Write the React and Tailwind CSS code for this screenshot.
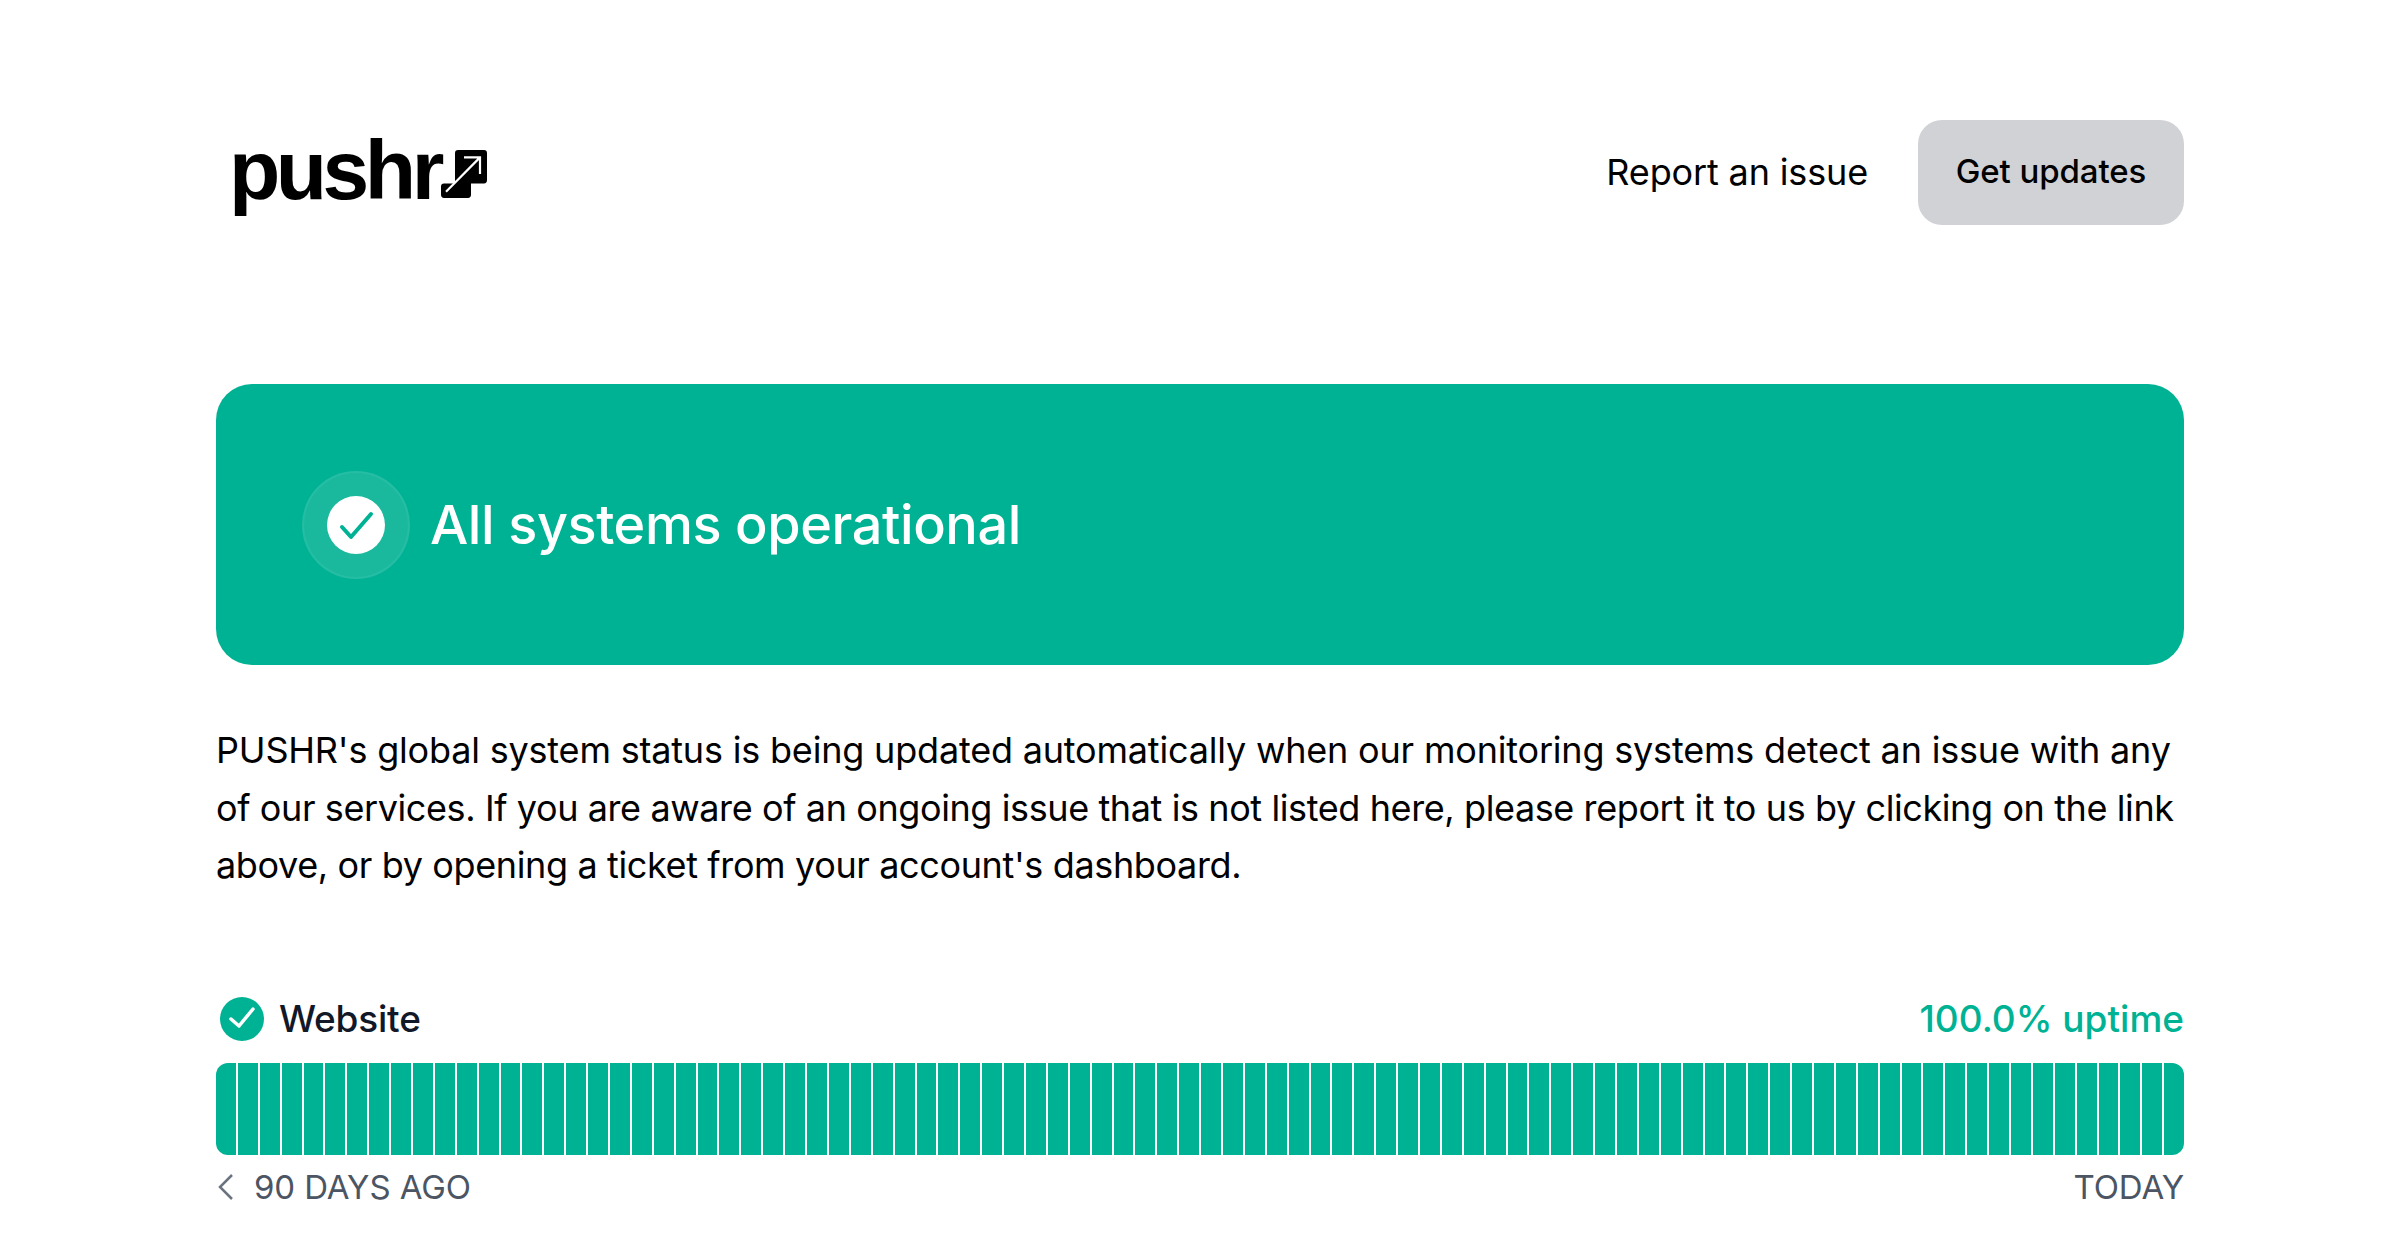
const DAYS = Array.from({ length: 90 }, (_, i) => i);

function LogoMark() {
    return (
        <svg width="48" height="50" viewBox="0 0 48 48" preserveAspectRatio="none" className="-ml-[1px] mt-[8px]">
            <path d="M16 4 a3 3 0 0 1 3-3 h26 a3 3 0 0 1 3 3 v26 a3 3 0 0 1-3 3 h-13 v11 a3 3 0 0 1-3 3 h-24 a3 3 0 0 1-3-3 v-8 a3 3 0 0 1 3-3 h11 z" fill="#000" />
            <path d="M7 41 L40 9 M25 8 H41 V24" fill="none" stroke="#fff" strokeWidth="2.2" />
        </svg>
    );
}

function CheckMark({ size, points, width, className }) {
    return (
        <svg width={size} height={size} viewBox={`0 0 ${size} ${size}`} className={className}>
            <path d={points} fill="none" stroke="currentColor" strokeWidth={width} strokeLinecap="round" strokeLinejoin="round" />
        </svg>
    );
}

export default function App() {
    return (
        <div className="min-h-[1260px] bg-white px-[216px] pt-[120px] font-['Inter',sans-serif] text-black">
            <header className="flex h-[105px] items-center justify-between">
                <div className="-mt-[5px] ml-[13px] flex items-center">
                    <span className="font-['Liberation_Sans',sans-serif] text-[84px] font-bold leading-none tracking-[-4.5px]">pushr</span>
                    <LogoMark />
                </div>
                <nav className="flex items-center gap-[50px]">
                    <a className="-mt-[2px] text-[36px] leading-none tracking-[-0.15px]">Report an issue</a>
                    <button className="h-[105px] w-[266px] rounded-[24px] bg-[#d1d2d6] pb-[2px] text-[33px] font-medium tracking-[-0.1px]">Get updates</button>
                </nav>
            </header>

            <section className="mt-[159px] flex h-[281px] items-center rounded-[36px] bg-[#00b294] px-[86px]">
                <div className="flex h-[108px] w-[108px] items-center justify-center rounded-full border-2 border-white/5 bg-white/10">
                    <div className="flex h-[58px] w-[58px] items-center justify-center rounded-full bg-white">
                        <CheckMark size={58} points="M15 31 L24 41 L44 18" width={4} className="text-[#00b294]" />
                    </div>
                </div>
                <h1 className="ml-[20px] text-[54px] font-medium tracking-[-0.42px] text-white">All systems operational</h1>
            </section>

            <p className="mt-[57px] text-[36px] leading-[57.6px] tracking-[-0.37px]">
                <span className="block whitespace-nowrap tracking-[-0.19px]">PUSHR's global system status is being updated automatically when our monitoring systems detect an issue with any</span>
                <span className="block whitespace-nowrap tracking-[-0.4px]">of our services. If you are aware of an ongoing issue that is not listed here, please report it to us by clicking on the link</span>
                <span className="block whitespace-nowrap">above, or by opening a ticket from your account's dashboard.</span>
            </p>

            <div className="mt-[102px] flex h-[44px] items-center justify-between">
                <div className="flex items-center">
                    <div className="ml-[4px] flex h-[44px] w-[44px] items-center justify-center rounded-full bg-[#00b294]">
                        <CheckMark size={44} points="M11 22 L19 29 L33 12" width={3.5} className="text-white" />
                    </div>
                    <span className="ml-[15px] text-[37px] font-medium tracking-[-0.2px] text-[#111827]">Website</span>
                </div>
                <span className="text-[37px] font-medium text-[#00b294]">100.0% uptime</span>
            </div>

            <div className="mt-[22px] flex h-[92px] gap-[2px] overflow-hidden rounded-[12px]">
                {DAYS.map((d) => (
                    <div key={d} className="flex-1 bg-[#00b294]" />
                ))}
            </div>

            <div className="mt-[12px] flex items-center justify-between text-[33px] leading-[40px] tracking-[-0.1px] text-[#4b5563]">
                <div className="flex items-center">
                    <svg width="16" height="28" viewBox="0 0 16 28" className="ml-[2px] text-[#6b7280]">
                        <path d="M14 2 L2 14 L14 26" fill="none" stroke="currentColor" strokeWidth="2.5" />
                    </svg>
                    <span className="ml-[20px]">90 DAYS AGO</span>
                </div>
                <span>TODAY</span>
            </div>
        </div>
    );
}
